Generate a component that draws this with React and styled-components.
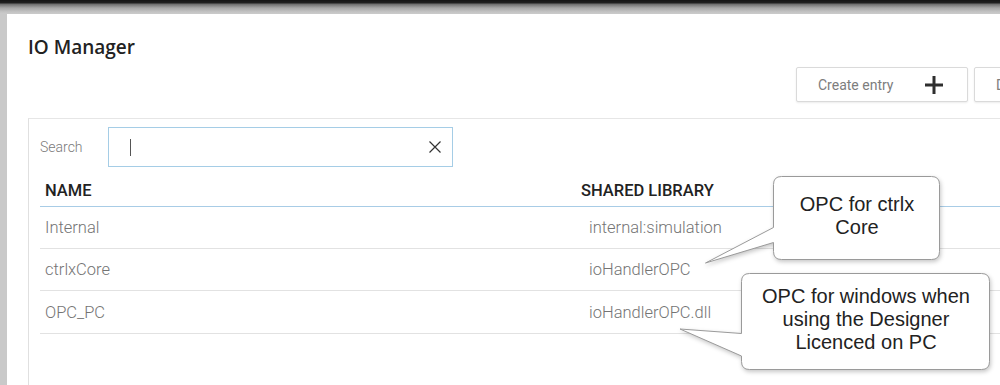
import React from "react";
import styled, { createGlobalStyle } from "styled-components";

const Global = createGlobalStyle`
  html, body {
    margin: 0;
    padding: 0;
    overflow: hidden;
    background: #c9c9c9;
  }
  * { box-sizing: border-box; }
`;

const Page = styled.div`
  position: relative;
  width: 1170px;
  height: 385px;
  display: flex;
  flex-direction: column;
  background: #c9c9c9;
`;

const TopBar = styled.div`
  height: 14px;
  flex: none;
  background: linear-gradient(
    to bottom,
    #161616 0px,
    #222 3px,
    #6c6c6c 4px,
    #a9a9a9 8px,
    #c4c4c4 12px,
    #cbcbcb 14px
  );
`;

const Main = styled.div`
  flex: 1;
  margin-left: 7px;
  width: 1160px;
  background: #fff;
  padding: 21px 21px 0 21px;
  display: flex;
  flex-direction: column;
`;

const Title = styled.h1`
  margin: 0;
  font-family: "Open Sans", "Liberation Sans", sans-serif;
  font-weight: 600;
  font-size: 19px;
  line-height: 24px;
  color: #222;
`;

const Toolbar = styled.div`
  display: flex;
  justify-content: flex-end;
  gap: 6px;
  margin-top: 8px;
`;

const ToolButton = styled.button`
  width: 172px;
  height: 35px;
  display: flex;
  align-items: center;
  justify-content: space-between;
  padding: 0 24px 0 21px;
  background: #fff;
  border: 1px solid #dadada;
  border-radius: 2px;
  box-shadow: 0 1px 2px rgba(0, 0, 0, 0.08);
  font-family: Roboto, "Liberation Sans", sans-serif;
  font-weight: 400;
  font-size: 14px;
  color: #7d7d7d;
  white-space: nowrap;
  cursor: pointer;
`;

const Card = styled.div`
  margin-top: 16px;
  flex: 1;
  border-top: 1px solid #e6e6e6;
  border-left: 1px solid #e0e0e0;
  padding: 8px 0 0 11px;
  display: flex;
  flex-direction: column;
`;

const SearchRow = styled.div`
  display: flex;
  align-items: center;
`;

const SearchLabel = styled.label`
  width: 68px;
  font-family: Roboto, "Liberation Sans", sans-serif;
  font-weight: 300;
  font-size: 14px;
  color: #7a7a7a;
`;

const SearchBox = styled.div`
  width: 345px;
  height: 40px;
  display: flex;
  align-items: center;
  justify-content: space-between;
  padding: 0 11px 0 21px;
  border: 1px solid #a5cde6;
  background: #fff;
`;

const Caret = styled.span`
  display: block;
  width: 1px;
  height: 17px;
  background: #555;
`;

const Table = styled.div`
  display: grid;
  grid-template-columns: 536px 1fr;
`;

const HeadCell = styled.div`
  padding: 14px 0 6px 5px;
  border-bottom: 1px solid #a8cce6;
  font-family: Roboto, "Liberation Sans", sans-serif;
  font-weight: 500;
  font-size: 16.5px;
  line-height: 19px;
  color: #222;
`;

const Cell = styled.div`
  height: ${(p) => (p.$tall ? 43 : 42)}px;
  display: flex;
  align-items: center;
  padding-left: ${(p) => (p.$indent ? 13 : 5)}px;
  border-bottom: 1px solid #e2e2e2;
  font-family: Roboto, "Liberation Sans", sans-serif;
  font-weight: 300;
  font-size: 16.5px;
  line-height: 19px;
  color: #747474;
`;

const Callout = styled.div`
  position: absolute;
  left: ${(p) => p.$x}px;
  top: ${(p) => p.$y}px;
  width: ${(p) => p.$w}px;
  height: ${(p) => p.$h}px;
`;

const Bubble = styled.svg`
  position: absolute;
  inset: 0;
  overflow: visible;
  filter: drop-shadow(1px 2px 2px rgba(0, 0, 0, 0.22));
`;

const CalloutText = styled.div`
  position: absolute;
  left: ${(p) => p.$l}px;
  top: ${(p) => p.$t}px;
  width: ${(p) => p.$w}px;
  height: ${(p) => p.$h}px;
  display: flex;
  align-items: center;
  justify-content: center;
  text-align: center;
  font-family: "Liberation Sans", Arial, sans-serif;
  font-size: 20px;
  line-height: 23px;
  color: #222;
`;

const PlusIcon = () => (
  <svg width="18" height="18" viewBox="0 0 18 18">
    <rect x="7.5" y="0" width="3" height="18" fill="#2e2e2e" />
    <rect x="0" y="7.5" width="18" height="3" fill="#2e2e2e" />
  </svg>
);

const CloseIcon = () => (
  <svg width="12" height="12" viewBox="0 0 12 12">
    <path d="M0.5 0.5 L11.5 11.5 M11.5 0.5 L0.5 11.5" stroke="#333" strokeWidth="1.2" fill="none" />
  </svg>
);

const rows = [
  { name: "Internal", lib: "internal:simulation" },
  { name: "ctrlxCore", lib: "ioHandlerOPC" },
  { name: "OPC_PC", lib: "ioHandlerOPC.dll" },
];

export default function App() {
  return (
    <>
      <Global />
      <Page>
        <TopBar />
        <Main>
          <Title>IO Manager</Title>
          <Toolbar>
            <ToolButton>
              <span>Create entry</span>
              <PlusIcon />
            </ToolButton>
            <ToolButton>
              <span>Delete entry</span>
            </ToolButton>
          </Toolbar>
          <Card>
            <SearchRow>
              <SearchLabel>Search</SearchLabel>
              <SearchBox>
                <Caret />
                <CloseIcon />
              </SearchBox>
            </SearchRow>
            <Table>
              <HeadCell>NAME</HeadCell>
              <HeadCell>SHARED LIBRARY</HeadCell>
              {rows.map((r, i) => (
                <React.Fragment key={r.name}>
                  <Cell $tall={i === 2}>{r.name}</Cell>
                  <Cell $tall={i === 2} $indent>
                    {r.lib}
                  </Cell>
                </React.Fragment>
              ))}
            </Table>
          </Card>
        </Main>

        <Callout $x={700} $y={170} $w={250} $h={100}>
          <Bubble width="250" height="100" viewBox="0 0 250 100">
            <path
              d="M81.5 6.5 H231.5 Q239.5 6.5 239.5 14.5 V81.5 Q239.5 89.5 231.5 89.5 H81.5 Q73.5 89.5 73.5 81.5 V72.5 L5.5 93 L73.5 57.5 V14.5 Q73.5 6.5 81.5 6.5 Z"
              fill="#fff"
              stroke="#9a9a9a"
              strokeWidth="1"
            />
          </Bubble>
          <CalloutText $l={74} $t={5} $w={166} $h={81}>
            OPC for ctrlx
            <br />
            Core
          </CalloutText>
        </Callout>

        <Callout $x={670} $y={268} $w={330} $h={110}>
          <Bubble width="330" height="110" viewBox="0 0 330 110">
            <path
              d="M79.5 5.5 H311.5 Q319.5 5.5 319.5 13.5 V93.5 Q319.5 101.5 311.5 101.5 H79.5 Q71.5 101.5 71.5 93.5 V88 L10 61 L71.5 65.5 V13.5 Q71.5 5.5 79.5 5.5 Z"
              fill="#fff"
              stroke="#9a9a9a"
              strokeWidth="1"
            />
          </Bubble>
          <CalloutText $l={72} $t={4} $w={248} $h={94}>
            OPC for windows when
            <br />
            using the Designer
            <br />
            Licenced on PC
          </CalloutText>
        </Callout>
      </Page>
    </>
  );
}
